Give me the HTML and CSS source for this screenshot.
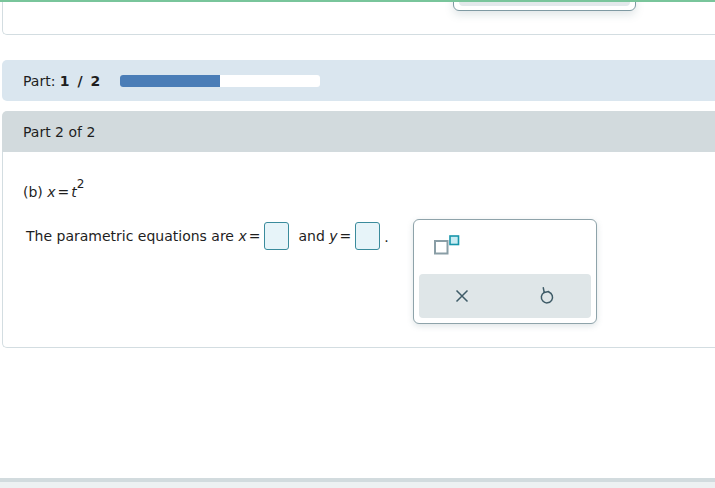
FILE: index.html
```html
<!DOCTYPE html>
<html>
<head>
<meta charset="utf-8">
<link rel="stylesheet" href="styles.css">
</head>
<body>
<div class="page">
  <div class="accent"></div>
  <div class="prev-card"></div>
  <div class="prev-popup"><div class="prev-popup-inner"></div></div>

  <div class="partbar">
    <span class="part-label">Part: <b class="frac">1 / 2</b></span>
    <div class="progress"><div class="progress-fill" style="width:50%"></div></div>
  </div>

  <div class="section">
    <div class="section-head">Part 2 of 2</div>
    <div class="section-body">
      <div class="q-line">(b) <span class="m">x</span><span class="eq">=</span><span class="m">t</span><sup class="sup">2</sup></div>
      <div class="answer-line">
        <span>The parametric equations are </span><span class="m">x</span><span class="eq">=</span><span class="box"></span>
        <span class="and">and </span><span class="m">y</span><span class="eq">=</span><span class="box box-last"></span><span class="dot">.</span>
      </div>

      <div class="popup">
        <div class="popup-top">
          <svg class="sq-icon" width="28" height="22" viewBox="0 0 28 22">
            <rect x="2" y="7" width="12.5" height="12.5" fill="#fff" stroke="#8a9ea6" stroke-width="2"/>
            <rect x="17" y="2" width="8.5" height="8.5" fill="#c8ecf3" stroke="#1896ab" stroke-width="1.6"/>
          </svg>
        </div>
        <div class="popup-actions">
          <svg class="ic-x" width="14" height="14" viewBox="0 0 14 14">
            <path d="M1.5 1.5 L12.5 12.5 M12.5 1.5 L1.5 12.5" stroke="#3e5b67" stroke-width="1.5" fill="none"/>
          </svg>
          <svg class="ic-undo" width="16" height="18" viewBox="0 0 16 18">
            <path d="M5.2 6.4 A5.6 5.6 0 1 0 9.8 6" stroke="#3e5b67" stroke-width="1.5" fill="none" stroke-linecap="round"/>
            <path d="M4.3 1.8 L5.2 6.4 L9.6 5.4" stroke="#3e5b67" stroke-width="1.5" fill="none" stroke-linecap="round" stroke-linejoin="round"/>
          </svg>
        </div>
      </div>
    </div>
  </div>

  <div class="footer-band"></div>
</div>
</body>
</html>
```

FILE: styles.css
```css
html, body {
  margin: 0;
  padding: 0;
  background: #ffffff;
}
body {
  font-family: "DejaVu Sans", Verdana, sans-serif;
  color: #222;
  font-size: 14px;
}
.page {
  position: relative;
  width: 715px;
  height: 488px;
  overflow: hidden;
}
.accent {
  height: 2px;
  background: #79c59b;
  position: relative;
  z-index: 3;
}
.prev-card {
  margin-left: 2px;
  height: 32px;
  border-left: 1px solid #d3dde1;
  border-bottom: 1px solid #d3dde1;
  border-bottom-left-radius: 5px;
}
.prev-popup {
  position: absolute;
  left: 453px;
  top: -20px;
  width: 181px;
  height: 29px;
  border: 1px solid #7f9aa3;
  border-radius: 6px;
  background: #fff;
  box-shadow: 0 4px 8px rgba(90, 120, 130, 0.18);
  z-index: 2;
}
.prev-popup-inner {
  position: absolute;
  left: 5px;
  right: 5px;
  bottom: 4px;
  height: 20px;
  background: #e3e9eb;
  border-radius: 4px;
}
.partbar {
  margin-top: 25px;
  margin-left: 2px;
  height: 41px;
  background: #dae6ef;
  border-radius: 5px 0 0 5px;
  display: flex;
  align-items: center;
  padding-left: 21px;
}
.part-label {
  font-size: 14px;
  color: #1e1e1e;
  width: 97px;
}
.frac {
  font-weight: bold;
  word-spacing: 3px;
}
.progress {
  width: 200px;
  height: 12px;
  background: #ffffff;
  border-radius: 3px;
  overflow: hidden;
}
.progress-fill {
  height: 100%;
  background: #4a7db7;
}
.section {
  margin-top: 10px;
  margin-left: 2px;
}
.section-head {
  height: 41px;
  background: #d2dadd;
  border-radius: 5px 0 0 0;
  display: flex;
  align-items: center;
  padding-left: 21px;
  font-size: 14px;
  color: #1e1e1e;
}
.section-body {
  position: relative;
  height: 195px;
  border-left: 1px solid #d3dde1;
  border-bottom: 1px solid #d3dde1;
  border-bottom-left-radius: 5px;
  padding-left: 20px;
}
.q-line {
  padding-top: 28px;
  height: 24px;
  line-height: 24px;
  font-size: 14px;
  color: #1e1e1e;
}
.m {
  font-style: italic;
  font-family: "DejaVu Sans", sans-serif;
}
.eq {
  padding: 0 2px;
}
.sup {
  font-size: 12px;
  vertical-align: 0;
  position: relative;
  top: -9px;
  margin-left: 0;
}
.answer-line {
  margin-top: 18px;
  padding-left: 3px;
  display: flex;
  align-items: center;
  height: 28px;
  font-size: 14px;
  color: #1e1e1e;
  white-space: pre;
}
.answer-line .eq {
  padding: 0 3px 0 2px;
}
.box {
  display: inline-block;
  width: 23px;
  height: 26px;
  border: 1px solid #3a8b9c;
  border-radius: 3px;
  background: #e7f4f9;
  margin-left: 1px;
  margin-right: 9px;
}
.box-last {
  margin-right: 4px;
}
.dot {
  position: relative;
  top: 1px;
}
.popup {
  position: absolute;
  left: 410px;
  top: 67px;
  width: 182px;
  height: 103px;
  border: 1px solid #8ea3aa;
  border-radius: 6px;
  background: #fff;
  box-shadow: 0 2px 6px rgba(90, 120, 130, 0.2);
  display: flex;
  flex-direction: column;
}
.popup-top {
  height: 54px;
  padding-left: 19px;
  padding-top: 14px;
  box-sizing: border-box;
}
.sq-icon {
  display: block;
}
.popup-actions {
  margin: 0 5px;
  height: 44px;
  background: #dfe6e8;
  border-radius: 4px;
  display: flex;
  align-items: center;
  justify-content: space-between;
  padding: 0 36px;
}
.ic-undo {
  position: relative;
  top: -1px;
}
.footer-band {
  position: absolute;
  left: 0;
  right: 0;
  bottom: 0;
  height: 10px;
  background: #edf1f2;
  border-top: 4px solid #d2dbde;
  box-sizing: border-box;
}
```
